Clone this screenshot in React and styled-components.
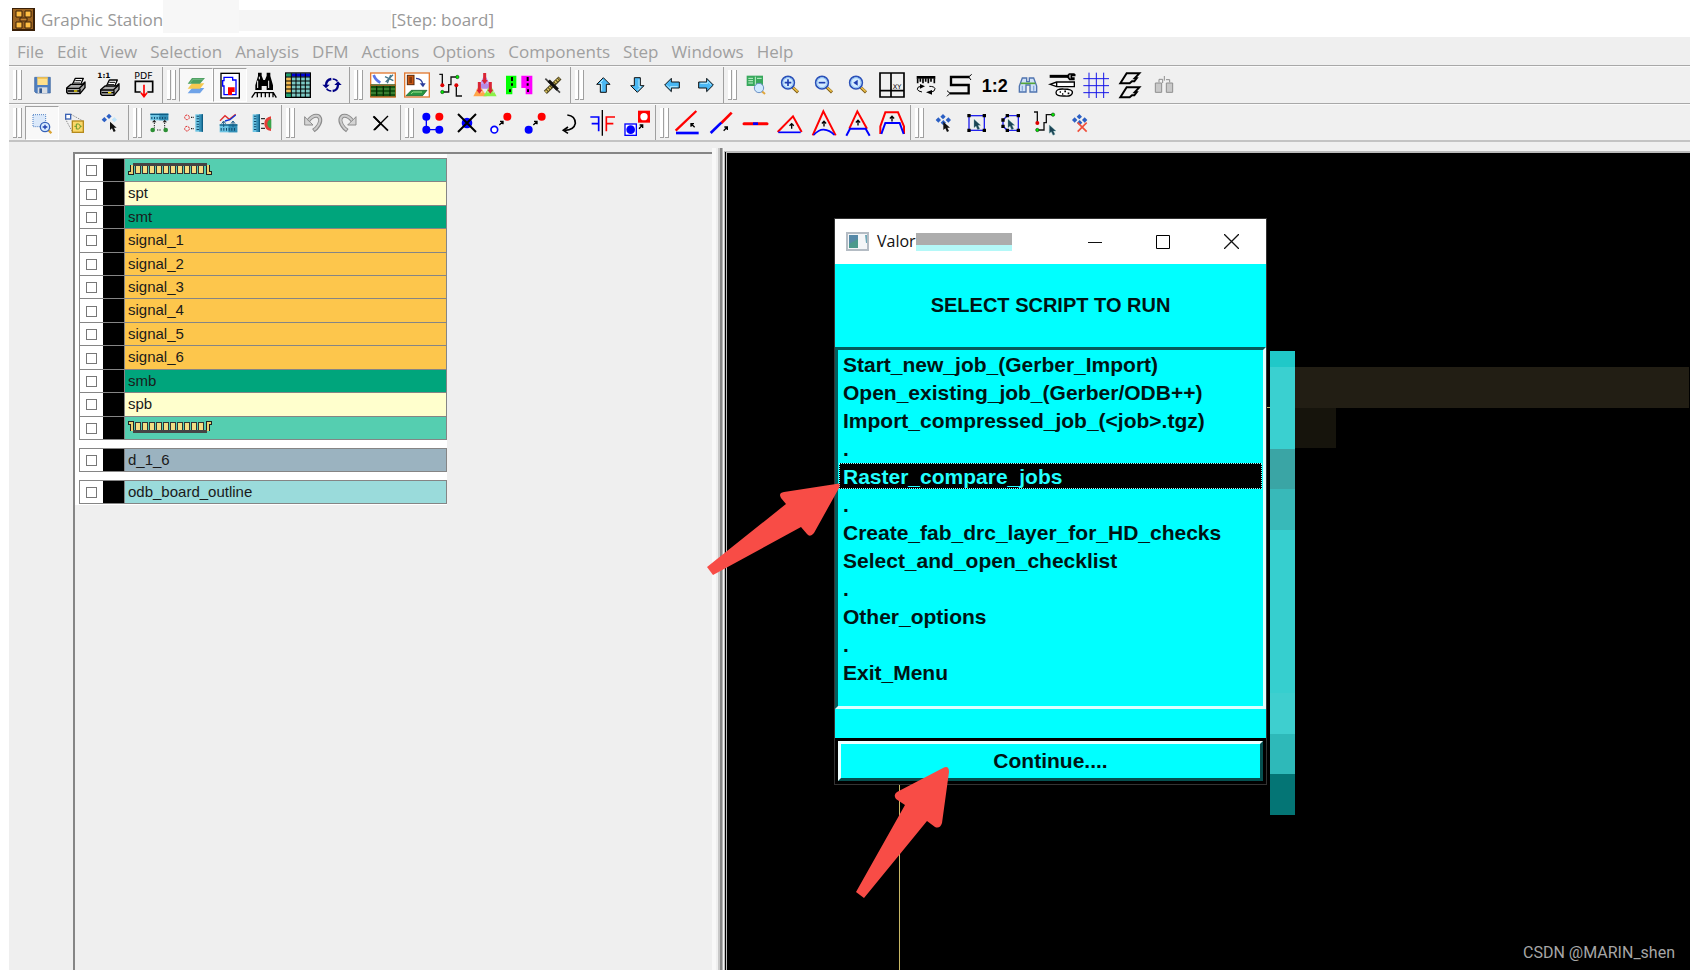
import React, { useState } from "react";
import styled, { createGlobalStyle } from "styled-components";

const GlobalStyle = createGlobalStyle`
	* {
		box-sizing: border-box;
	}
	body {
		margin: 0;
		background: #fff;
		font-family: "Open Sans", "Noto Sans", sans-serif;
	}
	button {
		padding: 0;
		border: 0;
		background: none;
		color: inherit;
		font: inherit;
	}
`;

const Page = styled.div`
	display: flex;
	flex-direction: column;
	min-height: 100vh;
	padding-left: 9px;
`;

const TitleBar = styled.header`
	display: flex;
	align-items: center;
	height: 37px;
	padding: 2px 3px 0;
	gap: 6px;
	color: #999;
`;

const AppTitle = styled.h1`
	display: flex;
	align-items: center;
	margin: 0;
	font-size: 17px;
	font-weight: 400;
	white-space: nowrap;
`;

const TitleMask = styled.span`
	display: flex;
	align-items: center;
	width: 228px;
	height: 37px;
	margin-top: -2px;
	&::before {
		content: "";
		width: 76px;
		height: 33px;
		align-self: flex-start;
		background: #f7f7f7;
	}
	&::after {
		content: "";
		flex: 1;
		height: 21px;
		margin-top: 3px;
		background: #f5f5f5;
	}
`;

const MenuBar = styled.nav`
	display: flex;
	align-items: center;
	gap: 13px;
	height: 29px;
	padding: 2px 8px 0;
	background: #efefef;
	border-bottom: 1px solid #a8a8a8;
	color: #a0a0a0;
	font-size: 17px;
	line-height: 24px;
`;

const ToolBar = styled.div`
	display: flex;
	height: 38px;
	background: #f0f0f0;
	border-top: 1px solid #fafafa;
	border-bottom: ${(props) => (props.last ? "2px solid #c3c3c3" : "1px solid #a8a8a8")};
`;

const ToolGroup = styled.div`
	display: flex;
	align-items: center;
	padding-right: 1px;
	& + & {
		border-left: 1px solid #a0a0a0;
		padding-right: 0;
	}
`;

const Handle = styled.span`
	display: flex;
	gap: 1px;
	width: 16px;
	padding-left: 4px;
	&::before,
	&::after {
		content: "";
		width: 3px;
		height: 29px;
		background: #fff;
		border-right: 1px solid #a0a0a0;
		border-bottom: 1px solid #a0a0a0;
	}
`;

const ToolButton = styled.button`
	display: flex;
	align-items: center;
	justify-content: center;
	width: 34px;
	height: 34px;
	svg {
		display: block;
		overflow: visible;
	}
	&[aria-pressed="true"] {
		background: #f8f8f8;
		border: 1px solid #fff;
		border-top-color: #a0a0a0;
		border-left-color: #a0a0a0;
	}
`;

const Workspace = styled.main`
	position: relative;
	flex: 1;
	display: grid;
	grid-template-columns: 703px 12px 1fr;
	padding-top: 6px;
	background: #efefef;
`;

const LayerPane = styled.section`
	margin: 4px 0 0 64px;
	border-top: 2px solid #858585;
	border-left: 2px solid #858585;
`;

const LayerPanel = styled.div`
	display: flex;
	flex-direction: column;
	gap: 8px;
	width: 372px;
	padding: 4px 0 1px 4px;
	background: #fff;
`;

const LayerStack = styled.ul`
	display: grid;
	grid-auto-rows: 1fr;
	height: ${(props) => (props.single ? "24px" : "282px")};
	margin: 0;
	padding: 0;
	list-style: none;
	border-bottom: 1px solid #858585;
`;

const LayerRow = styled.li`
	display: grid;
	grid-template-columns: 23px 21px 1fr;
	border: solid #858585;
	border-width: 1px 1px 0;
	background: #fff;
`;

const Visibility = styled.input`
	appearance: none;
	place-self: center;
	width: 11px;
	height: 11px;
	margin: 1px 0 0;
	border: 1px solid #777;
	background: #fff;
	&:checked {
		background: #777;
	}
`;

const Swatch = styled.span`
	background: #000;
`;

const LayerName = styled.label`
	padding-left: 3px;
	border-left: 1px solid #858585;
	background: ${(props) => props.tint};
	color: #1a1a1a;
	font: 15px/21px "Liberation Sans", Arial, sans-serif;
	svg {
		display: block;
		margin-top: 4px;
	}
`;

const Splitter = styled.div`
	border-left: 4px solid #f8f8f8;
	background: linear-gradient(90deg, #efefef 0 2px, #c8c8c8 2px 4px, #858585 4px 6px, #b5b5b5 6px 7px, #f5f5f5 7px);
`;

const Canvas = styled.section`
	position: relative;
	overflow: hidden;
	margin-top: 3px;
	background: #000;
	border-left: 3px double #bbb;
	border-top: 2px solid #bbb;
`;

const Block = styled.span`
	position: absolute;
	left: ${(props) => props.left}px;
	right: ${(props) => (props.width ? "auto" : "1px")};
	top: ${(props) => props.top}px;
	width: ${(props) => (props.width ? props.width + "px" : "auto")};
	height: ${(props) => props.height}px;
	background: ${(props) => props.tint};
`;

const BoardEdge = styled.span`
	position: absolute;
	left: 172px;
	top: 600px;
	bottom: 0;
	width: 1px;
	background: #c8b866;
`;

const MosaicColumn = styled.div`
	position: absolute;
	left: 543px;
	top: 198px;
	width: 25px;
	display: flex;
	flex-direction: column;
`;

const MosaicCell = styled.span`
	height: ${(props) => props.size}px;
	background: ${(props) => props.tint};
`;

const Credit = styled.span`
	position: absolute;
	right: 15px;
	bottom: 7px;
	color: #a6a6a6;
	font: 16px/20px Roboto, sans-serif;
`;

const Dialog = styled.div`
	position: absolute;
	left: 107px;
	top: 65px;
	width: 433px;
	background: #0ff;
	border: 1px solid #333;
	color: #001414;
	font: bold 21px/28px "Liberation Sans", Arial, sans-serif;
`;

const DialogBar = styled.div`
	display: flex;
	align-items: center;
	height: 45px;
	padding-left: 11px;
	background: #fff;
	color: #111;
	font: 16px "Open Sans", "Noto Sans", sans-serif;
	svg {
		display: block;
	}
`;

const DialogTitle = styled.span`
	padding: 0 0 1px 8px;
`;

const DialogMask = styled.span`
	width: 96px;
	height: 18px;
	margin-right: auto;
	background: linear-gradient(#adadad 0 12px, #b4f8f8 12px);
`;

const WindowButton = styled.button`
	display: flex;
	align-items: center;
	justify-content: center;
	width: 68px;
	height: 44px;
	&:last-child {
		margin-right: 1px;
	}
`;

const Heading = styled.h2`
	margin: 0;
	font-size: 20px;
	line-height: 83px;
	text-align: center;
`;

const ScriptList = styled.ul`
	margin: 0;
	padding: 0 1px 20px;
	list-style: none;
	border: 3px solid;
	border-color: #045c5c #dff #dff #045c5c;
`;

const ScriptItem = styled.li`
	padding: 1px 0;
`;

const ScriptButton = styled.button`
	display: block;
	width: 100%;
	height: 26px;
	padding-left: 3px;
	line-height: 23px;
	text-align: left;
	border: 1px dotted transparent;
	&[aria-pressed="true"] {
		background: #000;
		border-color: #9ff;
		color: #2ff;
	}
`;

const DialogFooter = styled.div`
	margin-top: 29px;
	padding: 3px;
	background: #000;
`;

const ContinueButton = styled.button`
	display: block;
	width: 100%;
	height: 40px;
	border: 3px solid;
	border-color: #eff #045050 #045050 #eff;
	background: #0ff;
`;

const Pointers = styled.svg`
	position: absolute;
	left: 691px;
	top: 338px;
	pointer-events: none;
`;

const Printer = () => (
	<g stroke="#000" strokeWidth="4" strokeLinejoin="round">
		<path d="M216 76L226 55H250L241 76Z" fill="#fff" />
		<path d="M226 62H243M222 69H240" strokeWidth="3" />
		<path d="M200 84L213 73H247L255 66V83L240 101H204L200 97Z" fill="#aaa" />
		<path d="M200 85H238L254 70M203 93H238M240 101V86" fill="none" />
		<path d="M222 93H232" stroke="#ffe600" />
	</g>
);

const Cursor = ({ x, y, fill = "#111" }) => (
	<path
		d={`M${x} ${y}v25l6-5 5 11 6-3-5-10h8z`}
		fill={fill}
		stroke={fill === "#111" ? "none" : "#6aa"}
		strokeWidth="1"
	/>
);

const Diamonds = ({ x, y, last = "#2b5fc4" }) => (
	<g>
		<path d={`M${x} ${y - 9}l8 8-8 8-8-8z`} fill="#2b5fc4" />
		<path d={`M${x - 14} ${y + 1}l8 8-8 8-8-8z`} fill="#2b5fc4" />
		<path d={`M${x + 16} ${y + 1}l8 8-8 8-8-8z`} fill={last} />
		<path d={`M${x + 1} ${y + 9}l8 8-8 8-8-8z`} fill={last === "#2b5fc4" ? last : "none"} />
	</g>
);

const Lens = ({ cx, children }) => (
	<g>
		<path d={`M${cx + 9} 81l17 16`} stroke="#7d5a10" strokeWidth="9" />
		<path d={`M${cx + 10} 81l15 14`} stroke="#f0c24a" strokeWidth="5" />
		<circle cx={cx - 4} cy="68" r="19" fill="#d5ecff" stroke="#2a50b8" strokeWidth="5" />
		<circle cx={cx - 4} cy="68" r="15" fill="none" stroke="#8fc3f4" strokeWidth="3" />
		{children}
	</g>
);

const FatArrow = ({ turn }) => (
	<g transform={`rotate(${turn} 100 75)`}>
		<path d="M100 53L120 73H109V97H91V73H80Z" fill="#4ab8f4" stroke="#111" strokeWidth="3" />
		<path d="M99 60L89 70H95V92" fill="none" stroke="#b9ecff" strokeWidth="3" />
	</g>
);

const Ruler = ({ x, y, w, h, vertical }) => (
	<g>
		<rect x={x} y={y} width={w} height={h} fill="#6cc3e2" />
		<rect x={x + w / 2} y={y} width={w / 2} height={h} fill="#1a78a4" opacity=".7" />
		<path
			d={vertical ? `M${x + w / 3} ${y + 4}V${y + h - 2}` : `M${x + 3} ${y + h / 2 + 3}H${x + w - 2}`}
			stroke="#0e4a6c"
			strokeWidth={(vertical ? w : h) / 3}
			strokeDasharray="3 5"
		/>
		<path d={vertical ? `M${x + w - 2} ${y}V${y + h}` : `M${x} ${y + 2}H${x + w}`} stroke="#0e5d84" strokeWidth="4" />
	</g>
);

const Dot = ({ x, y, fill, r = 8 }) => <circle cx={x} cy={y} r={r} fill={fill} />;

const SmallArrow = ({ x, y, turn = 0 }) => (
	<path
		d={`M${x - 6} ${y + 6}L${x + 4} ${y - 4}M${x - 4} ${y - 5}H${x + 5}V${y + 4}`}
		transform={`rotate(${turn} ${x} ${y})`}
		fill="none"
		stroke="#000"
		strokeWidth="4"
	/>
);

// every drawing keeps its own origin: [left, top] of an 84 unit cell
const icons = {
	save: [84, 33, <>
		<path d="M104 52H151V99H108L104 95Z" fill="#4f7fc0" stroke="#39629c" strokeWidth="2" />
		<rect x="112" y="52" width="31" height="23" fill="#ffe08a" />
		<path d="M112 54H143" stroke="#f0b93c" strokeWidth="4" />
		<rect x="113" y="82" width="29" height="17" fill="#d9dde2" />
		<rect x="118" y="85" width="8" height="14" fill="#34598f" />
	</>],
	print: [186, 33, <Printer />],
	printScale: [186, 33, <>
		<text x="190" y="54" fontFamily="DejaVu Sans" fontWeight="bold" fontSize="22">1:1</text>
		<g transform="translate(0 5)"><Printer /></g>
	</>],
	pdf: [390, 33, <>
		<text x="403" y="56" fontFamily="DejaVu Sans" fontSize="28">PDF</text>
		<path d="M422 96H406V64H458V96H442" fill="none" stroke="#000" strokeWidth="5" />
		<path d="M432 74V108M423 98L432 110L441 98" fill="none" stroke="#f00" strokeWidth="5" />
	</>],
	layers: [546, 33, <>
		<path d="M563 100L576 84H613L600 100Z" fill="#6fa3e8" />
		<path d="M563 86L576 70H613L600 86Z" fill="#f6c94f" />
		<path d="M563 71L576 54H615L600 71Z" fill="#4da060" />
		<path d="M570 69L579 58H608" stroke="#86c796" strokeWidth="2" fill="none" />
	</>],
	page: [648, 33, <>
		<rect x="663" y="40" width="55" height="74" fill="#fff" stroke="#000" strokeWidth="4" />
		<path d="M672 52H698V60H708V104H672V78H668V62H672Z" fill="none" stroke="#00f" strokeWidth="4" />
		<path d="M684 82H704V96H696V105H684Z" fill="#f00" />
	</>],
	find: [750, 33, <>
		<path d="M774 38H785V47L790 60H795L800 47V38H811V48L819 76V90H800V78H785V90H766V76L774 48Z" fill="#000" />
		<path d="M773 62V84M806 62V84M778 50V58" stroke="#fff" strokeWidth="3" />
		<path d="M755 113L765 98H820L829 113M772 100V112M784 100V112M796 100V112M808 100V112M819 100V112" fill="none" stroke="#000" strokeWidth="4" />
	</>],
	grid: [852, 33, <>
		<rect x="857" y="39" width="74" height="73" fill="#7cc9c4" stroke="#000" strokeWidth="4" />
		<rect x="875" y="41" width="55" height="9" fill="#0000d8" />
		<rect x="859" y="41" width="14" height="9" fill="#17a06b" />
		<rect x="859" y="52" width="14" height="46" fill="#f6b94c" />
		<rect x="859" y="98" width="14" height="12" fill="#17a06b" />
		<path d="M874 40V111M888 40V111M902 40V111M916 40V111M858 51H930M858 63H930M858 75H930M858 87H930M858 99H930" stroke="#000" strokeWidth="3" />
	</>],
	refresh: [954, 33, <>
		<path d="M978 75Q979 59 994 57M1014 75Q1013 91 998 93" fill="none" stroke="#000084" strokeWidth="7" />
		<path d="M998 57Q1008 57 1012 64M994 93Q984 93 980 86" fill="none" stroke="#000084" strokeWidth="5" />
		<path d="M967 74H989L978 85ZM1003 75H1025L1014 64Z" fill="#000084" />
	</>],
	stackup: [85, 33, <>
		<rect x="90" y="39" width="74" height="72" fill="#fff" stroke="#e27a32" strokeWidth="4" />
		<path d="M99 45Q104 60 119 68" stroke="#5a75e8" strokeWidth="8" fill="none" />
		<path d="M133 50L158 62M150 45L140 70M157 44L135 66" stroke="#44768c" strokeWidth="4" />
		<rect x="90" y="73" width="74" height="38" fill="#125412" />
		<path d="M90 76H164M90 110H164" stroke="#9a6828" strokeWidth="4" />
		<path d="M90 87H164M90 99H164" stroke="#61a84e" strokeWidth="3" />
		<path d="M108 78V108M128 78V108M148 78V108" stroke="#052705" strokeWidth="4" />
	</>],
	place: [187, 33, <>
		<rect x="192" y="39" width="74" height="72" fill="#fff" stroke="#e27a32" strokeWidth="4" />
		<rect x="200" y="46" width="20" height="28" fill="#cb5712" stroke="#5b2909" strokeWidth="3" />
		<path d="M206 54H214M206 60H214M206 66H214" stroke="#451c04" strokeWidth="3" />
		<path d="M226 55Q244 56 246 72" fill="none" stroke="#2b3d9c" strokeWidth="4" />
		<path d="M237 70H255L247 82Z" fill="#2b3d9c" />
		<path d="M196 107L212 91H259L246 107Z" fill="#289641" stroke="#145824" strokeWidth="2" />
		<path d="M211 101L218 96H244" stroke="#9fe38c" strokeWidth="3" fill="none" />
	</>],
	nets: [291, 33, <>
		<path d="M298 43H307V74M307 96H326V74H333V51H352M349 76V108H366" fill="none" stroke="#111" strokeWidth="4" />
		<Dot x={307} y={76} fill="#d00" r={6} /><Dot x={349} y={76} fill="#d00" r={6} />
		<circle cx="352" cy="51" r="5" fill="#0e0" stroke="#141" strokeWidth="2" />
		<circle cx="307" cy="96" r="5" fill="#0e0" stroke="#141" strokeWidth="2" />
	</>],
	pyramid: [391, 33, <>
		<path d="M432 43L454 86H411Z" fill="#b58be4" />
		<path d="M416 75L438 109H398Z" fill="#ffa64a" />
		<path d="M449 75L468 109H428Z" fill="#8bf048" />
		<path d="M413 96H435M440 96H463M422 69H444" stroke="#f6d6ee" strokeWidth="3" strokeDasharray="4 4" />
		<path d="M432 39V62M416 66V91M449 66V91" stroke="#da2434" strokeWidth="9" />
		<path d="M423 60H441L432 73ZM407 89H425L416 101ZM440 89H458L449 101Z" fill="#da2434" />
	</>],
	compare: [494, 33, <>
		<path d="M497 47H528V84H516V103H497Z" fill="#0f0" />
		<path d="M543 47H576V103H556V84H543Z" fill="#f0f" />
		<path d="M515 51V63M515 70V77M509 88V96M562 51V63M562 70V77M563 88V96" stroke="#000" strokeWidth="6" />
	</>],
	tools: [596, 33, <>
		<path d="M615 97L659 54" stroke="#4c4320" strokeWidth="13" />
		<path d="M616 96L657 55" stroke="#dcc45b" strokeWidth="7" strokeDasharray="5 3" />
		<path d="M615 56L659 98" stroke="#444" strokeWidth="5" />
		<path d="M625 62L652 89" stroke="#111" strokeWidth="10" />
	</>],
	up: [60, 33, <FatArrow turn={0} />],
	down: [60, 33, <FatArrow turn={180} />],
	left: [58, 33, <FatArrow turn={270} />],
	right: [58, 33, <FatArrow turn={90} />],
	overview: [338, 33, <>
		<rect x="349" y="47" width="49" height="31" fill="#37a85c" />
		<path d="M354 55H368M354 62H368M354 69H368M375 50V75M380 55H394" stroke="#c6f5cf" strokeWidth="3" />
		<path d="M393 92L404 102" stroke="#e0a63b" strokeWidth="6" />
		<circle cx="386" cy="84" r="14" fill="#cfe9ff" stroke="#6b8fc4" strokeWidth="3" />
	</>],
	zoomIn: [441, 33, <Lens cx={478}><path d="M464 68H484M474 58V78" stroke="#1e3fb0" strokeWidth="5" /></Lens>],
	zoomOut: [441, 33, <Lens cx={478}><path d="M464 68H484" stroke="#1e3fb0" strokeWidth="5" /></Lens>],
	zoomBack: [441, 33, <Lens cx={478}><path d="M479 59V77L466 68Z" fill="#1e3fb0" /></Lens>],
	coords: [747, 33, <>
		<path d="M750 39H822V111H750ZM783 39V111M750 92H822" fill="none" stroke="#000" strokeWidth="5" />
		<text x="788" y="87" fontFamily="DejaVu Sans" fontSize="20">XY</text>
	</>],
	measure: [39, 33, <>
		<path d="M50 52H106" stroke="#000" strokeWidth="8" />
		<path d="M53 55V70M61 55V65M69 55V70M77 55V65M85 55V70M93 55V65M103 55V70" stroke="#000" strokeWidth="5" />
		<path d="M62 79Q51 80 52 88Q54 94 66 96M92 97Q106 94 105 86Q103 79 88 79" fill="none" stroke="#000" strokeWidth="3" />
		<path d="M60 72L75 79L60 86ZM96 90L78 97L96 104Z" fill="#000" />
	</>],
	snake: [142, 33, <>
		<path d="M209 51H154V75H207V100H150" fill="none" stroke="#000" strokeWidth="7" />
		<path d="M207 51L216 43M207 51L214 60M151 100L142 92M151 100L142 109" stroke="#000" strokeWidth="3" />
	</>],
	ratio: [242, 33, <text x="283" y="96" textAnchor="middle" fontFamily="Liberation Sans" fontWeight="bold" fontSize="54">1:2</text>],
	binoculars: [344, 33, <>
		<path d="M366 54H379V65H387V54H400L409 78V96H389V75H377V96H357V78Z" fill="#cfe1f8" stroke="#4f73ae" strokeWidth="4" />
		<path d="M361 70H405" stroke="#54a63b" strokeWidth="5" />
		<path d="M366 77V92M400 77V92" stroke="#88aadd" strokeWidth="4" />
	</>],
	wrench: [447, 33, <>
		<path d="M449 49H508" stroke="#000" strokeWidth="9" />
		<path d="M524 42H508L502 49L509 58H524M524 42V46H514V54H524" fill="none" stroke="#000" strokeWidth="5" />
		<path d="M450 73L470 66H523V80H470ZM470 66V80" fill="#fff" stroke="#000" strokeWidth="4" />
		<path d="M468 98Q468 86 490 87Q520 87 517 99Q514 110 494 108Q468 109 468 98Z" fill="#fff" stroke="#000" strokeWidth="4" />
		<path d="M479 96H483M493 94H498M486 102H490M503 100H508" stroke="#000" strokeWidth="5" />
	</>],
	hash: [550, 33, <path d="M568 38V114M590 38V114M612 38V114M551 56H628M551 77H628M551 98H628" stroke="#1616e8" strokeWidth="3" />],
	flip: [652, 33, <path d="M662 70L681 40H719L705 55H711L704 64H697L690 70ZM662 112L681 82H719L705 97H711L704 106H697L690 112Z" fill="none" stroke="#000" strokeWidth="6" />],
	unlink: [754, 33, <g fill="#c9c9c9" stroke="#8f8f8f" strokeWidth="3">
		<path d="M767 69H786V97H767ZM800 69H819V97H800Z" />
		<path d="M778 67V58H789V69M799 59H810V67M794 48V62" fill="none" />
	</g>],
	zoomArea: [83, 146, <>
		<rect x="98" y="163" width="38" height="36" fill="#dbe9fa" stroke="#4d7fc4" strokeWidth="3" strokeDasharray="3 3" />
		<path d="M144 209L153 219" stroke="#dba434" strokeWidth="7" />
		<circle cx="134" cy="200" r="14" fill="#d8ecff" stroke="#3561b8" strokeWidth="4" />
		<path d="M127 200H141M134 193V207" stroke="#1e3fb0" strokeWidth="4" />
	</>],
	component: [187, 146, <>
		<rect x="198" y="162" width="15" height="14" fill="#fff" stroke="#3a62b4" strokeWidth="4" />
		<path d="M214 162L248 181M198 177L216 211" stroke="#444" strokeWidth="2" strokeDasharray="3 3" />
		<rect x="218" y="182" width="33" height="34" fill="#fbd869" stroke="#b58a1c" strokeWidth="4" />
		<path d="M224 198H230M241 198H246M230 191H236Q242 193 242 198Q242 204 236 206H230Z" fill="none" stroke="#689a2d" strokeWidth="3" />
	</>],
	move: [289, 146, <><Diamonds x={328} y={169} last="#bfe4fb" /><Cursor x={331} y={184} /></>],
	rulerTop: [443, 146, <>
		<Ruler x={450} y={160} w={54} h={20} />
		<path d="M462 187V204M493 187V204M470 209H484" stroke="#222" strokeWidth="3" strokeDasharray="4 3" />
		<path d="M455 186H468L462 178ZM487 186H500L493 178Z" fill="#222" />
		<Dot x={457} y={209} fill="#2c8f34" r={7} /><Dot x={496} y={209} fill="#2c8f34" r={7} />
	</>],
	rulerRight: [545, 146, <>
		<g fill="none" stroke="#e02d2d" strokeWidth="3" strokeDasharray="6 2"><circle cx="560" cy="171" r="7" /><circle cx="560" cy="205" r="7" /></g>
		<path d="M572 171H582M572 205H582" stroke="#222" strokeWidth="4" strokeDasharray="3 2" />
		<Ruler x={585} y={162} w={23} h={52} vertical />
	</>],
	rulerGraph: [647, 146, <>
		<path d="M659 181L674 166L687 177L706 162" fill="none" stroke="#e02d2d" strokeWidth="4" />
		<path d="M674 182L689 178L706 164" fill="none" stroke="#0b35d8" strokeWidth="4" />
		<Ruler x={658} y={192} w={53} h={24} />
		<path d="M670 200V184M698 200V184M664 190L670 182L676 190M692 190L698 182L704 190" stroke="#1b5b86" strokeWidth="3" fill="none" />
	</>],
	rulerLeft: [749, 146, <>
		<Ruler x={757} y={162} w={22} h={53} vertical />
		<path d="M782 175H794M782 204H794M783 190H791" stroke="#333" strokeWidth="4" />
		<path d="M812 168Q792 172 792 190Q792 208 812 212Z" fill="#e33d38" />
		<path d="M813 176Q801 180 801 190Q801 201 813 205Z" fill="#39a34a" />
	</>],
	undo: [902, 146, <>
		<path d="M924 181Q938 163 953 167Q969 178 948 204L939 211" fill="none" stroke="#8c8c8c" strokeWidth="12" />
		<path d="M924 181Q938 163 953 167Q968 178 948 203L941 209" fill="none" stroke="#ccc" strokeWidth="6" />
		<path d="M913 169V194H938L930 186L920 177Z" fill="#d4d4d4" stroke="#8c8c8c" strokeWidth="3" />
	</>],
	redo: [1005, 146, <g transform="translate(1981 0) scale(-1 1)">
		<path d="M924 181Q938 163 953 167Q969 178 948 204L939 211" fill="none" stroke="#8c8c8c" strokeWidth="12" />
		<path d="M924 181Q938 163 953 167Q968 178 948 203L941 209" fill="none" stroke="#ccc" strokeWidth="6" />
		<path d="M913 169V194H938L930 186L920 177Z" fill="#d4d4d4" stroke="#8c8c8c" strokeWidth="3" />
	</g>],
	remove: [87, 146, <>
		<path d="M100 168L144 211" stroke="#000" strokeWidth="5" />
		<path d="M144 167L101 210" stroke="#000" strokeWidth="4" />
		<path d="M102 169L122 190L104 208" fill="none" stroke="#000" strokeWidth="5" />
	</>],
	padLink: [240, 146, <>
		<path d="M259 169V208H298" fill="none" stroke="#00f" strokeWidth="4" />
		<Dot x={259} y={169} fill="#00f" r={12} /><Dot x={259} y={208} fill="#00f" r={12} />
		<Dot x={298} y={208} fill="#00f" r={12} /><Dot x={298} y={169} fill="#f00" r={12} />
	</>],
	padDelete: [342, 146, <>
		<Dot x={381} y={188} fill="#00f" r={16} />
		<path d="M354 161L408 215M408 161L354 215" stroke="#000" strokeWidth="6" />
	</>],
	padCopy: [444, 146, <>
		<circle cx="463" cy="208" r="10" fill="#fff" stroke="#00f" strokeWidth="5" />
		<Dot x={502} y={169} fill="#f00" r={12} /><SmallArrow x={484} y={188} />
	</>],
	padMove: [546, 146, <><Dot x={566} y={208} fill="#00f" r={12} /><Dot x={605} y={169} fill="#f00" r={12} /><SmallArrow x={586} y={188} /></>],
	rotate: [648, 146, <>
		<path d="M682 164Q706 167 706 189Q702 209 675 210" fill="none" stroke="#000" strokeWidth="5" />
		<path d="M684 200L670 210L684 219" fill="none" stroke="#000" strokeWidth="5" />
	</>],
	mirror: [750, 146, <>
		<path d="M751 170H776V213M755 190H776" fill="none" stroke="#00f" strokeWidth="5" />
		<path d="M825 170H799V213M820 190H799" fill="none" stroke="#f00" strokeWidth="5" />
		<path d="M787 149V226" stroke="#000" strokeWidth="4" />
	</>],
	padSwap: [-18, 146, <>
		<rect x="24" y="151" width="36" height="36" fill="#f00" /><Dot x={42} y={169} fill="#fff" r={11} />
		<rect x="-15" y="191" width="34" height="34" fill="#fff" stroke="#00f" strokeWidth="4" /><Dot x={2} y={208} fill="#00f" r={13} />
		<SmallArrow x={33} y={199} />
	</>],
	lineAngle: [136, 146, <>
		<path d="M138 211L200 152" stroke="#f00" strokeWidth="7" />
		<path d="M139 218H207" stroke="#00f" strokeWidth="8" /><SmallArrow x={189} y={195} turn={-90} />
	</>],
	lineExtend: [237, 146, <>
		<path d="M274 188L305 157" stroke="#f00" strokeWidth="8" />
		<path d="M242 218L274 187" stroke="#00f" strokeWidth="8" /><SmallArrow x={287} y={205} />
	</>],
	lineJoin: [340, 146, <>
		<path d="M343 190H412" stroke="#f00" strokeWidth="9" strokeLinecap="round" />
		<path d="M370 190H385" stroke="#00f" strokeWidth="8" />
	</>],
	triangle: [441, 146, <>
		<path d="M443 215L489 168L515 215" fill="none" stroke="#f00" strokeWidth="6" />
		<path d="M445 216H512" stroke="#00f" strokeWidth="5" /><SmallArrow x={485} y={197} turn={-45} />
	</>],
	arcUp: [541, 146, <>
		<path d="M546 225L578 153L615 225" fill="none" stroke="#f00" strokeWidth="6" />
		<path d="M549 224Q565 207 579 208Q597 209 611 224" fill="none" stroke="#00f" strokeWidth="5" /><SmallArrow x={580} y={190} turn={-45} />
	</>],
	lineA: [643, 146, <>
		<path d="M656 205L680 153L709 205" fill="none" stroke="#f00" strokeWidth="6" />
		<path d="M647 226L658 205H705L717 226" fill="none" stroke="#00f" strokeWidth="6" /><SmallArrow x={682} y={187} turn={-45} />
	</>],
	trapezoid: [746, 146, <>
		<path d="M750 221V198L765 156H803L821 198V221" fill="none" stroke="#f00" strokeWidth="6" />
		<path d="M753 221L765 188H808L820 221" fill="none" stroke="#00f" strokeWidth="6" /><SmallArrow x={785} y={175} turn={-45} />
	</>],
	pickMove: [90, 146, <><Diamonds x={129} y={170} /><Cursor x={130} y={184} /></>],
	pickRect: [192, 146, <>
		<rect x="207" y="166" width="46" height="44" fill="none" stroke="#22e" strokeWidth="4" />
		<path d="M202 166H212M248 166H258M202 210H212M248 210H258" stroke="#000" strokeWidth="10" />
		<Cursor x={222} y={177} fill="#1d4555" />
	</>],
	pickPoly: [294, 146, <>
		<path d="M309 179L322 166H355V210H322L309 198Z" fill="none" stroke="#22e" strokeWidth="4" />
		<path d="M317 166H327M350 166H360M317 210H327M350 210H360M304 179H314M304 198H314" stroke="#000" strokeWidth="10" />
		<Cursor x={324} y={177} fill="#1d4555" />
	</>],
	pickNet: [396, 146, <>
		<path d="M402 155H412V188M412 209H432V187H439V163H459" fill="none" stroke="#111" strokeWidth="4" />
		<Dot x={412} y={188} fill="#d00" r={6} />
		<circle cx="459" cy="163" r="5" fill="#0e0" stroke="#141" strokeWidth="2" />
		<circle cx="412" cy="209" r="5" fill="#0e0" stroke="#141" strokeWidth="2" />
		<Cursor x={448} y={194} fill="#1d4555" />
	</>],
	pickClear: [498, 146, <>
		<Diamonds x={538} y={170} />
		<path d="M533 187L560 214M560 187L533 214" stroke="#f0503c" strokeWidth="5" />
	</>],
};

const toolBars = [
	[
		["save", "print", "printScale", "pdf"],
		["layers", "page", "find", "grid", "refresh"],
		["stackup", "place", "nets", "pyramid", "compare", "tools"],
		["up", "down", "left", "right"],
		["overview", "zoomIn", "zoomOut", "zoomBack", "coords", "measure", "snake", "ratio", "binoculars", "wrench", "hash", "flip", "unlink"],
	],
	[
		["zoomArea", "component", "move"],
		["rulerTop", "rulerRight", "rulerGraph", "rulerLeft"],
		["undo", "redo", "remove"],
		["padLink", "padDelete", "padCopy", "padMove", "rotate", "mirror", "padSwap"],
		["lineAngle", "lineExtend", "lineJoin", "triangle", "arcUp", "lineA", "trapezoid"],
		["pickMove", "pickRect", "pickPoly", "pickNet", "pickClear"],
	],
];

const pressedTools = ["layers", "page", "zoomArea"];

const menus = ["File", "Edit", "View", "Selection", "Analysis", "DFM", "Actions", "Options", "Components", "Step", "Windows", "Help"];

const stacks = [
	[
		{ id: "comp_top", tint: "#55ceb0", chip: "top" },
		{ id: "spt", tint: "#ffffcd" },
		{ id: "smt", tint: "#00a57c" },
		{ id: "signal_1", tint: "#fdc64c" },
		{ id: "signal_2", tint: "#fdc64c" },
		{ id: "signal_3", tint: "#fdc64c" },
		{ id: "signal_4", tint: "#fdc64c" },
		{ id: "signal_5", tint: "#fdc64c" },
		{ id: "signal_6", tint: "#fdc64c" },
		{ id: "smb", tint: "#00a57c" },
		{ id: "spb", tint: "#ffffcd" },
		{ id: "comp_bottom", tint: "#55ceb0", chip: "bottom" },
	],
	[{ id: "d_1_6", tint: "#9bb3c0" }],
	[{ id: "odb_board_outline", tint: "#9adbdb" }],
];

const scripts = [
	"Start_new_job_(Gerber_Import)",
	"Open_existing_job_(Gerber/ODB++)",
	"Import_compressed_job_(<job>.tgz)",
	".",
	"Raster_compare_jobs",
	".",
	"Create_fab_drc_layer_for_HD_checks",
	"Select_and_open_checklist",
	".",
	"Other_options",
	".",
	"Exit_Menu",
];

const mosaic = [
	[16, "#20c8c8"],
	[82, "#3ad0d0"],
	[40, "#3aa5a5"],
	[41, "#38b9b9"],
	[163, "#36cfcf"],
	[41, "#3ecfcf"],
	[40, "#2eb9b9"],
	[41, "#047575"],
];

const ToolIcon = ({ name }) => {
	const [x, y, art] = icons[name];
	return (
		<svg width="28" height="28" viewBox={`${x} ${y} 84 84`} fill="#000" aria-hidden="true">
			{art}
		</svg>
	);
};

const ChipIcon = ({ side }) => (
	<svg width="84" height="12" viewBox="0 0 84 12" role="img" aria-label={`${side} components`}>
		<g transform={side === "top" ? undefined : "matrix(1 0 0 -1 0 12)"}>
			<path d="M0 10H4V2M84 10H80V2" fill="none" stroke="#222" strokeWidth="4" />
			<path d="M1 10H4V2M83 10H80V2" fill="none" stroke="#e9d271" strokeWidth="2" />
			{[8, 15, 22, 29, 36, 43, 50, 57, 64, 71].map((x) => (
				<g key={x}>
					<rect x={x - 1} y="2" width="6" height="9" fill="#333" />
					<rect x={x} y="3" width="4" height="7" fill="#f3dd83" />
				</g>
			))}
			<rect x="5" y="0" width="74" height="3" fill="#444" />
		</g>
	</svg>
);

const AppLogo = () => (
	<svg width="23" height="23" viewBox="0 0 23 23" aria-hidden="true">
		<rect width="23" height="23" fill="#3a2008" />
		<rect x="1" y="1" width="20" height="20" fill="#9c6422" />
		<path d="M4 3h6v6H4zM13 3h6v6h-6zM4 14h6v6H4zM13 14h6v6h-6z" fill="#ffbe45" stroke="#3a2008" />
		<path d="M8 10h7v3H8z" fill="#c68432" stroke="#3a2008" />
	</svg>
);

const WindowLogo = () => (
	<svg width="23" height="19" viewBox="0 0 23 19" aria-hidden="true">
		<rect x="1" y="1" width="21" height="17" fill="#f4f6f8" stroke="#b4bcc4" strokeWidth="2" />
		<rect x="3" y="3" width="9" height="13" fill="#4c9a8c" />
		<path d="M3 3h9v4L3 12z" fill="#5689a8" />
		<path d="M19 3h2v8h-1z" fill="#6fa8b8" />
	</svg>
);

const Tools = ({ groups, last }) => (
	<ToolBar last={last ? 1 : undefined} role="toolbar">
		{groups.map((group) => (
			<ToolGroup key={group[0]}>
				<Handle />
				{group.map((name) => (
					<ToolButton key={name} type="button" aria-label={name} aria-pressed={pressedTools.includes(name)}>
						<ToolIcon name={name} />
					</ToolButton>
				))}
			</ToolGroup>
		))}
	</ToolBar>
);

const Layer = ({ id, tint, chip }) => (
	<LayerRow>
		<Visibility type="checkbox" id={id} />
		<Swatch />
		<LayerName htmlFor={id} tint={tint}>
			{chip ? <ChipIcon side={chip} /> : id}
		</LayerName>
	</LayerRow>
);

const ScriptDialog = () => {
	const [selected, setSelected] = useState(4);
	return (
		<Dialog role="dialog" aria-label="Valor">
			<DialogBar>
				<WindowLogo />
				<DialogTitle>Valor</DialogTitle>
				<DialogMask />
				<WindowButton type="button" aria-label="Minimize">
					<svg width="14" height="14" stroke="#111"><path d="M0 7.500H14" /></svg>
				</WindowButton>
				<WindowButton type="button" aria-label="Maximize">
					<svg width="14" height="14" stroke="#000" fill="none"><path d="M.5 .5H13.500V13.500H.5Z" /></svg>
				</WindowButton>
				<WindowButton type="button" aria-label="Close">
					<svg width="15" height="15" stroke="#111" strokeWidth="1.300"><path d="M0 0L15 15M15 0L0 15" /></svg>
				</WindowButton>
			</DialogBar>
			<Heading>SELECT SCRIPT TO RUN</Heading>
			<ScriptList>
				{scripts.map((script, i) => (
					<ScriptItem key={i}>
						<ScriptButton type="button" aria-pressed={i === selected} onClick={() => setSelected(i)}>
							{script}
						</ScriptButton>
					</ScriptItem>
				))}
			</ScriptList>
			<DialogFooter>
				<ContinueButton type="button">Continue....</ContinueButton>
			</DialogFooter>
		</Dialog>
	);
};

const App = () => (
	<Page>
		<GlobalStyle />
		<TitleBar>
			<AppLogo />
			<AppTitle>
				Graphic Station
				<TitleMask />
				[Step: board]
			</AppTitle>
		</TitleBar>
		<MenuBar>
			{menus.map((menu) => (
				<button key={menu} type="button">{menu}</button>
			))}
		</MenuBar>
		<Tools groups={toolBars[0]} />
		<Tools groups={toolBars[1]} last />
		<Workspace>
			<LayerPane>
				<LayerPanel>
					{stacks.map((stack) => (
						<LayerStack key={stack[0].id} single={stack.length === 1 ? 1 : undefined}>
							{stack.map((layer) => (
								<Layer key={layer.id} {...layer} />
							))}
						</LayerStack>
					))}
				</LayerPanel>
			</LayerPane>
			<Splitter />
			<Canvas>
				<BoardEdge />
				<Block left={568} top={214} height={41} tint="#221e14" />
				<Block left={568} top={255} width={41} height={40} tint="#16140c" />
				<Block left={539} top={254} width={4} height={1} tint="#c8b866" />
				<MosaicColumn>
					{mosaic.map(([size, tint], i) => (
						<MosaicCell key={i} size={size} tint={tint} />
					))}
				</MosaicColumn>
				<ScriptDialog />
				<Credit>CSDN @MARIN_shen</Credit>
			</Canvas>
			<Pointers width="260" height="430" viewBox="700 480 260 430" fill="#f84c46" aria-hidden="true">
				<path d="M836 484Q841 482 839 488L814 533Q810 538 807 534L801 527L713 575L707 567L786 504L781 498Q778 493 784 492Z" />
				<path d="M943 768Q949 765 949 772L942 823Q940 829 935 827L927 821L864 898L856 892L905 805L896 799Q893 795 897 792Z" />
			</Pointers>
		</Workspace>
	</Page>
);

export default App;
